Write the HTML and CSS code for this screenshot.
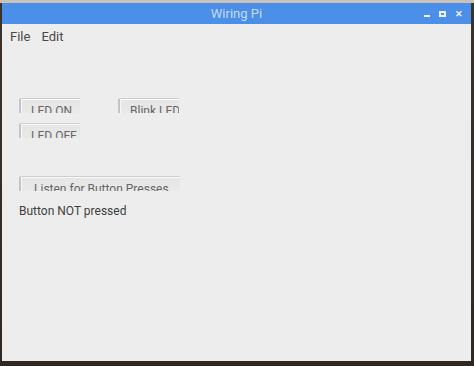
FILE: index.html
```html
<!DOCTYPE html>
<html lang="en">
<head>
  <meta charset="UTF-8" />
  <title>Wiring Pi</title>
  <link rel="stylesheet" href="styles.css">
</head>
<body>
  <div class="window">
    <div class="titlebar">
      <span class="title">Wiring Pi</span>
      <div class="controls">
        <span class="ctl ctl-min"></span>
        <span class="ctl ctl-max"></span>
        <span class="ctl ctl-close">&#x2715;</span>
      </div>
    </div>
    <div class="menubar">
      <span class="menu-item">File</span>
      <span class="menu-item">Edit</span>
    </div>
    <div class="content">
      <div class="btn-row">
        <div class="btn-clip"><div class="btn">LED ON</div></div>
        <div class="btn-clip"><div class="btn">Blink LED</div></div>
      </div>
      <div class="btn-row row-off">
        <div class="btn-clip"><div class="btn">LED OFF</div></div>
      </div>
      <div class="btn-clip btn-wide"><div class="btn">Listen for Button Presses</div></div>
      <div class="status">Button NOT pressed</div>
    </div>
  </div>
</body>
</html>
```

FILE: styles.css
```css
* { margin: 0; padding: 0; box-sizing: border-box; }
body {
  width: 474px;
  height: 366px;
  overflow: hidden;
  background: linear-gradient(180deg, #c9c2bb 0px, #c9c2bb 3px, #3b322c 3px, #2f2823 100%);
  font-family: Roboto, "Liberation Sans", sans-serif;
  padding: 3px 3px 0 2px;
}
.window {
  height: 358px;
  background: #ededed;
  display: flex;
  flex-direction: column;
}
.titlebar {
  height: 21px;
  background: #4b8fe9;
  position: relative;
  display: flex;
  align-items: center;
  justify-content: center;
}
.title { color: #c6dbf7; font-size: 13px; }
.controls {
  position: absolute;
  right: 8px;
  top: 0;
  height: 21px;
  display: flex;
  align-items: center;
  gap: 9px;
}
.ctl { display: block; color: #eef4fd; }
.ctl-min { width: 6px; height: 2px; background: #eef4fd; margin-top: 5px; }
.ctl-max { width: 7px; height: 6px; border: 2px solid #eef4fd; }
.ctl-close { font-size: 9px; font-weight: 700; width: 8px; line-height: 8px; }
.menubar {
  display: flex;
  gap: 11px;
  padding: 5px 0 0 8px;
  height: 28px;
}
.menu-item { font-size: 13px; color: #484848; }
.content { padding: 46px 0 0 17px; }
.btn-row { display: flex; gap: 38px; }
.row-off { margin-top: 10px; }
.btn-clip {
  width: 61px;
  height: 15px;
  overflow: hidden;
}
.btn {
  height: 30px;
  border-top: 1px solid #cfcfcf;
  border-left: 2px solid #c4c4c4;
  border-radius: 2px 0 0 0;
  background: linear-gradient(180deg, #e6e6e6, #ececec);
  box-shadow: inset 1px 1px 0 #f8f8f8;
  color: #666666;
  font-size: 12px;
  line-height: 15px;
  padding: 5px 0 0 10px;
  white-space: nowrap;
}
.btn-wide { width: 161px; margin-top: 38px; }
.btn-wide .btn { padding-left: 13px; }
.status {
  margin-top: 13px;
  font-size: 12px;
  color: #3e3e3e;
}
```
